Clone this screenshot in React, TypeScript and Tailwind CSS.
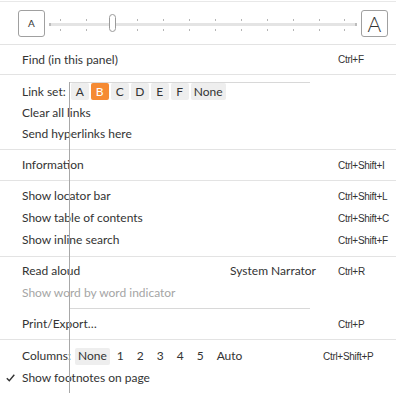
import React from "react";

const FONT = { fontFamily: 'Lato, "Open Sans", sans-serif' };

function Shortcut({ children, w = "w-[58px]" }: { children: React.ReactNode; w?: string }) {
  return (
    <span
      className={`${w} shrink-0 text-[10px] tracking-[-0.3px] text-[#333]`}
      style={{ fontFamily: '"Liberation Sans", Arial, sans-serif' }}
    >
      {children}
    </span>
  );
}

function Row({
  children,
  shortcut,
  h = "h-[22px]",
  muted,
  check,
  sw,
}: {
  children: React.ReactNode;
  shortcut?: string;
  h?: string;
  muted?: boolean;
  check?: boolean;
  sw?: string;
}) {
  return (
    <div className={`relative flex ${h} items-center pl-[22px]`}>
      {check && (
        <svg className="absolute left-[6px] top-1/2 -translate-y-1/2" width="9" height="8" viewBox="0 0 9 8">
          <path d="M0.8 4.2 L3.3 6.8 L8.3 0.8" fill="none" stroke="#333" strokeWidth="1.4" />
        </svg>
      )}
      <div className={`flex flex-1 items-center text-[12px] ${muted ? "text-[#a5a5a5]" : "text-[#333]"}`}>{children}</div>
      {shortcut && <Shortcut w={sw}>{shortcut}</Shortcut>}
    </div>
  );
}

function Slider() {
  const ticks = [60, 86, 137, 163, 189, 215, 241, 267, 293, 319, 344];
  const off = 45;
  return (
    <svg width="316" height="42" viewBox="0 0 316 42" className="shrink-0">
      <rect x={49 - off} y="21" width={357 - 49} height="3" fill="#e4e4e4" />
      <rect x={49 - off} y="21" width="2" height="3" fill="#bdbdbd" />
      <rect x={355 - off} y="21" width="2" height="3" fill="#bdbdbd" />
      {ticks.map((t) => (
        <g key={t}>
          <rect x={t - off} y="17" width="1" height="2" fill="#b5b5b5" />
          <rect x={t - off} y="27" width="1" height="2" fill="#b5b5b5" />
        </g>
      ))}
      <rect x={109.5 - off} y="12.5" width="6" height="17" rx="3" fill="#fff" stroke="#9a9a9a" />
    </svg>
  );
}

function Sep() {
  return <div className="h-px bg-[#e3e3e3]" />;
}

export default function App() {
  return (
    <div className="relative h-[393px] w-[396px] overflow-hidden bg-white" style={FONT}>
      <div className="mt-px h-px bg-[#e8e8e8]" />
      {/* slider row */}
      <div className="flex h-[42px] items-center pl-[18px]">
        <div className="flex h-[27px] w-[27px] shrink-0 items-center justify-center rounded-[3px] border border-[#a0a0a0] text-[10px] text-[#333]">
          A
        </div>
        <Slider />
        <div className="flex h-[27px] w-[27px] shrink-0 items-center justify-center rounded-[3px] border border-[#a0a0a0] text-[21px] font-light leading-none text-[#333]">
          A
        </div>
      </div>
      <Sep />
      <Row h="h-[29px]" shortcut="Ctrl+F">
        Find (in this panel)
      </Row>
      <Sep />
      <div className="pb-[5px] pt-[6px]">
        <Row h="h-[21px]">
          <span className="mr-[5px]">Link set:</span>
          <div className="flex gap-[2px]">
            {["A", "B", "C", "D", "E", "F"].map((l) => (
              <span
                key={l}
                className={`flex h-[17px] w-[18px] items-center justify-center rounded-[2px] ${
                  l === "B" ? "bg-[#f58a33] text-white" : "bg-[#eeeeee] text-[#333]"
                }`}
              >
                {l}
              </span>
            ))}
            <span className="flex h-[17px] items-center rounded-[2px] bg-[#eeeeee] px-[3px]">None</span>
          </div>
        </Row>
        <Row h="h-[21px]">Clear all links</Row>
        <Row h="h-[21px]">Send hyperlinks here</Row>
      </div>
      <Sep />
      <Row h="h-[30px]" shortcut="Ctrl+Shift+I">
        Information
      </Row>
      <Sep />
      <div className="pb-[5px] pt-[4px]">
        <Row shortcut="Ctrl+Shift+L">Show locator bar</Row>
        <Row shortcut="Ctrl+Shift+C">Show table of contents</Row>
        <Row shortcut="Ctrl+Shift+F">Show inline search</Row>
      </div>
      <Sep />
      <div className="pb-[4px] pt-[3px]">
        <Row shortcut="Ctrl+R">
          <span className="flex-1">Read aloud</span>
          <span className="mr-[22px]">System Narrator</span>
        </Row>
        <Row muted>Show word by word indicator</Row>
        <div className="h-[9px]" />
        <Row shortcut="Ctrl+P">Print/Export…</Row>
      </div>
      <Sep />
      <div className="pt-[5px]">
        <Row shortcut="Ctrl+Shift+P" sw="w-[73px]">
          <span className="mr-[4px]">Columns:</span>
          <div className="flex gap-[1px]">
            <span className="flex h-[17px] items-center rounded-[2px] bg-[#eeeeee] px-[3px]">None</span>
            {["1", "2", "3", "4", "5", "Auto"].map((c) => (
              <span key={c} className="flex h-[17px] items-center px-[6px]">
                {c}
              </span>
            ))}
          </div>
        </Row>
        <Row check>Show footnotes on page</Row>
      </div>

      {/* overlay outline */}
      <div className="pointer-events-none absolute left-[69px] top-[82px] h-[227px] w-[241px] border-y border-[#d8d8d8]" />
      <div className="pointer-events-none absolute bottom-0 left-[69px] top-[82px] w-px bg-[#a8a8a8]" />
    </div>
  );
}
